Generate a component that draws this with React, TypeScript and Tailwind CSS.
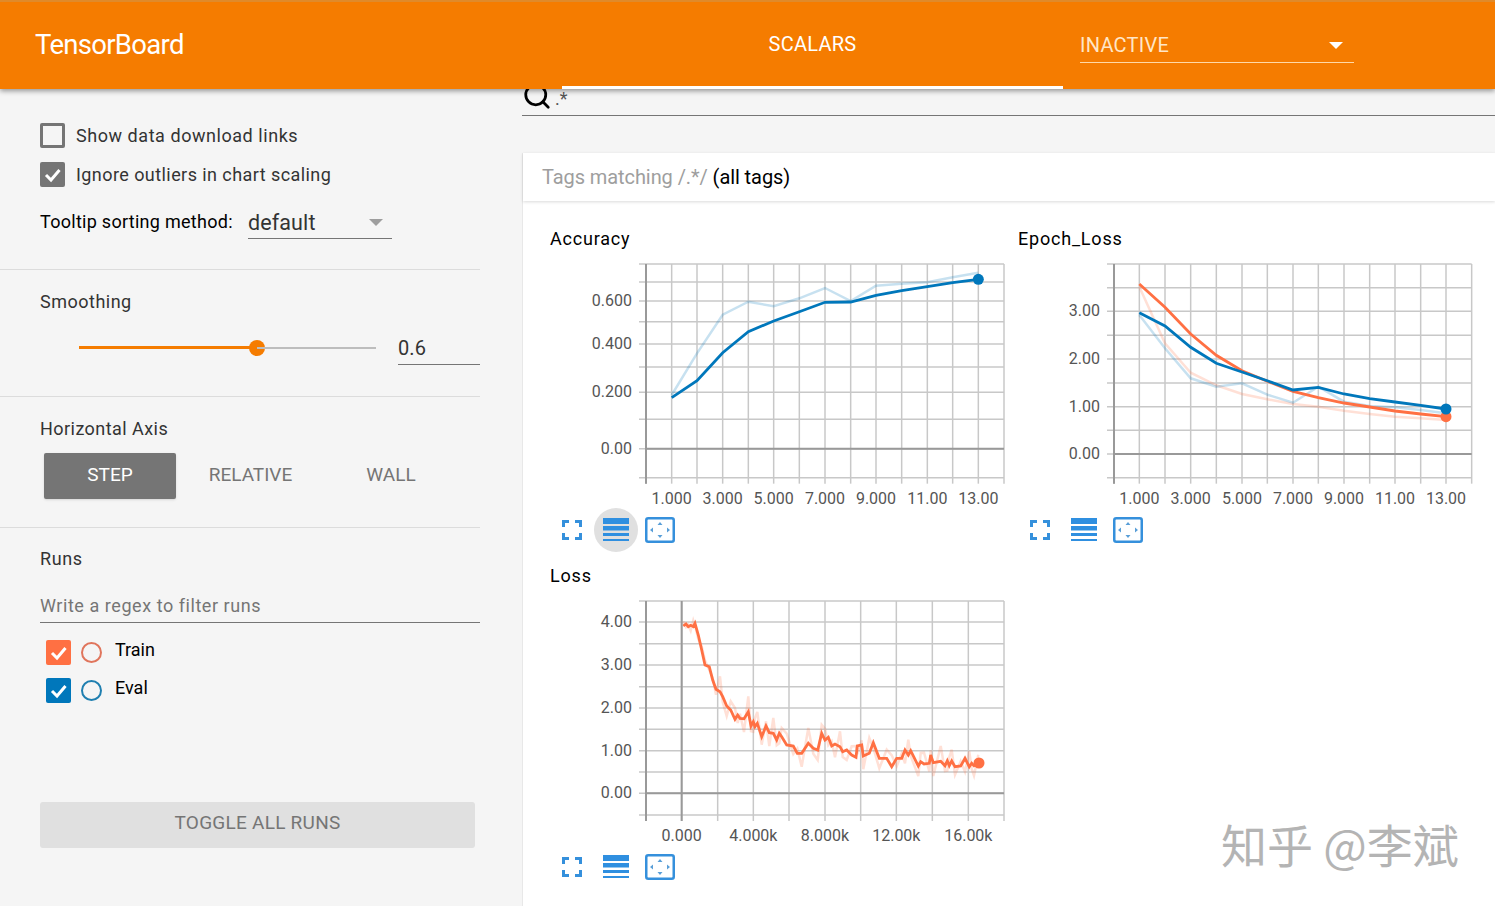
import { Search } from "lucide-react";

const FONT = "font-['Roboto',sans-serif]";
const BLUE = "#0077bb";
const ORANGE = "#ff7043";

type Pt = number[];

type Series = {
  color: string;
  light: Pt[];
  main: Pt[];
  dot?: Pt;
};

type ChartProps = {
  title: string;
  dx: number;
  dy: number;
  vLines: number[];
  hLines: number[];
  zeroV?: number;
  zeroH: number;
  xLabels: [number, string][];
  yLabels: [number, string][];
  series: Series[];
  active?: boolean;
};

const accuracyLight = [[395, 525], [471, 400], [548, 284], [625, 245], [701, 259], [778, 235], [855, 204], [932, 243], [1008, 197], [1085, 191], [1162, 187], [1238, 172], [1315, 158]];
const accuracyMain = [[395, 533], [471, 482], [548, 398], [625, 335], [701, 303], [778, 275], [855, 247], [932, 246], [1008, 226], [1085, 212], [1162, 200], [1238, 188], [1315, 178]];

const epochBlueLight = [[388, 285], [465, 385], [542, 475], [619, 500], [696, 490], [772, 524], [849, 548], [925, 500], [1002, 545], [1079, 558], [1155, 562], [1232, 570], [1308, 580]];
const epochBlue = [[388, 278], [465, 318], [542, 382], [619, 430], [696, 456], [772, 482], [849, 510], [925, 502], [1002, 522], [1079, 536], [1155, 546], [1232, 556], [1308, 567]];
const epochOrangeLight = [[388, 200], [465, 370], [542, 458], [619, 496], [696, 522], [772, 538], [849, 552], [925, 560], [1002, 572], [1079, 582], [1155, 590], [1232, 595], [1308, 600]];
const epochOrange = [[388, 192], [465, 262], [542, 342], [619, 406], [696, 452], [772, 484], [849, 514], [925, 533], [1002, 549], [1079, 561], [1155, 573], [1232, 582], [1308, 590]];

// traced from the loss curve, x and y at the chart's 3x grid
const lossRaw = [[40, 78], [48, 72], [55, 80], [62, 76], [70, 80], [75, 70], [85, 105], [95, 150], [105, 195], [118, 200], [128, 240], [138, 268], [150, 275], [158, 290], [170, 318], [182, 330], [195, 358], [203, 345], [210, 355], [222, 356], [235, 335], [243, 378], [250, 365], [255, 380], [262, 370], [275, 410], [288, 378], [298, 398], [310, 400], [320, 420], [328, 400], [335, 410], [350, 435], [370, 438], [382, 460], [395, 460], [415, 430], [430, 445], [443, 450], [455, 400], [465, 420], [475, 412], [485, 438], [495, 432], [510, 440], [518, 455], [530, 450], [545, 465], [558, 472], [562, 438], [575, 435], [580, 468], [598, 460], [610, 428], [628, 475], [650, 475], [665, 500], [680, 475], [695, 475], [705, 450], [715, 465], [722, 452], [745, 498], [752, 485], [762, 492], [778, 490], [782, 465], [790, 488], [812, 484], [825, 497], [832, 482], [838, 497], [845, 483], [855, 500], [872, 498], [885, 475], [898, 500], [905, 490], [912, 497], [925, 490]];
const lossMain = lossRaw.map(([x, y]) => [x + 390, y + 120]);
const noise = [-34, 24, -14, 40, -46, 16, 30, -26];
const lossLight = lossMain.map(([x, y], i) => [x, y + noise[i % noise.length] * (i < 12 ? 0.4 : 1)]);

const toPath = (pts: Pt[], dx: number, dy: number) =>
  pts.map(([x, y]) => `${(x / 3 - dx).toFixed(1)},${(y / 3 - dy).toFixed(1)}`).join(" ");

const FullscreenIcon = () => (
  <svg width="20" height="20" viewBox="0 0 20 20" fill="none" stroke="#3590dc" strokeWidth="3">
    <path d="M1.500 7V1.500H7M13 1.500h5.500V7M18.500 13v5.500H13M7 18.500H1.500V13" />
  </svg>
);

const ListIcon = () => (
  <svg width="26" height="24" viewBox="0 0 26 24" fill="#2f8fe0">
    <rect x="0" y="0" width="26" height="6" />
    <rect x="0" y="8" width="26" height="4.500" />
    <rect x="0" y="15" width="26" height="3" />
    <rect x="0" y="21" width="26" height="2" />
  </svg>
);

const FitIcon = () => (
  <svg width="30" height="26" viewBox="0 0 30 26" fill="none">
    <rect x="1.250" y="1.250" width="27.500" height="23.500" rx="2" stroke="#3590dc" strokeWidth="2.500" />
    <path d="M15 5l2.500 3h-5zM15 21l2.500-3h-5zM5 13l3-2.500v5zM25 13l-3-2.500v5z" fill="#5a9fd8" />
  </svg>
);

const Chart = ({ title, dx, dy, vLines, hLines, zeroV, zeroH, xLabels, yLabels, series, active }: ChartProps) => {
  const left = vLines[0];
  const right = vLines[vLines.length - 1];
  const top = hLines[0];
  const bottom = hLines[hLines.length - 1];
  const X = (v: number) => v / 3 - dx;
  const Y = (v: number) => v / 3 - dy;

  return (
    <div className="w-[468px] h-[337px]">
      <div className="h-6 pt-px text-[18px] leading-6 tracking-[0.8px] text-black">{title}</div>
      <svg width="460" height="250" className="mt-2 block">
        {vLines.map((v) => (
          <line key={v} x1={X(v)} x2={X(v)} y1={Y(top)} y2={Y(bottom) + 6} stroke="#c8c8c8" strokeWidth="1.500" />
        ))}
        {hLines.map((h) => (
          <line key={h} x1={X(left) - 7} x2={X(right)} y1={Y(h)} y2={Y(h)} stroke="#c8c8c8" strokeWidth="1.500" />
        ))}
        <line x1={X(left)} x2={X(left)} y1={Y(top)} y2={Y(bottom) + 6} stroke="#999999" strokeWidth="2" />
        {zeroV !== undefined && (
          <line x1={X(zeroV)} x2={X(zeroV)} y1={Y(top)} y2={Y(bottom) + 6} stroke="#999999" strokeWidth="2" />
        )}
        <line x1={X(left)} x2={X(right)} y1={Y(zeroH)} y2={Y(zeroH)} stroke="#999999" strokeWidth="2" />

        {yLabels.map(([y, text]) => (
          <text key={text} x="82" y={Y(y) + 5} textAnchor="end" fontSize="16" fill="#555555">
            {text}
          </text>
        ))}
        {xLabels.map(([x, text]) => (
          <text key={text} x={X(x)} y="246" textAnchor="middle" fontSize="16" fill="#555555">
            {text}
          </text>
        ))}

        {series.map((s) => (
          <polyline key={s.color + "l"} points={toPath(s.light, dx, dy)} fill="none" stroke={s.color} strokeOpacity="0.22" strokeWidth="2.500" />
        ))}
        {series.map((s) => (
          <polyline key={s.color + "m"} points={toPath(s.main, dx, dy)} fill="none" stroke={s.color} strokeWidth="2.800" />
        ))}
        {series.map(
          (s) => s.dot && <circle key={s.color + "d"} cx={X(s.dot[0])} cy={Y(s.dot[1])} r="5.500" fill={s.color} />,
        )}
      </svg>
      <div className="flex h-11 items-center">
        <button className="flex h-11 w-11 items-center justify-center">
          <FullscreenIcon />
        </button>
        <button className={`flex h-11 w-11 items-center justify-center rounded-full ${active ? "bg-[#e0e0e0]" : ""}`}>
          <ListIcon />
        </button>
        <button className="flex h-11 w-11 items-center justify-center">
          <FitIcon />
        </button>
      </div>
    </div>
  );
};

const Check = ({ bg, checked = true }: { bg: string; checked?: boolean }) => (
  <span className={`flex h-[25px] w-[25px] items-center justify-center rounded-[2px] ${bg}`}>
    {checked && (
      <svg width="21" height="21" viewBox="0 0 21 21" fill="none" stroke="#ffffff" strokeWidth="3">
        <path d="M4 11l5 5 8.500-10" />
      </svg>
    )}
  </span>
);

const Caret = ({ className }: { className: string }) => <span className={`h-0 w-0 border-x-[7px] border-t-[7px] border-x-transparent ${className}`} />;

const Sidebar = () => (
  <aside className="w-[522px] shrink-0 text-[18px] text-[#333333]">
    {/* Options */}
    <div className="h-[181px] w-[480px] border-b border-[#dcdcdc] pl-10 pt-[34px]">
      <div className="flex h-6 items-center gap-[11px] tracking-[0.55px]">
        <span className="h-[25px] w-[25px] rounded-[2px] border-[3px] border-[#757575]" />
        Show data download links
      </div>
      <div className="mt-[15px] flex h-6 items-center gap-[11px] tracking-[0.43px]">
        <Check bg="bg-[#757575]" />
        Ignore outliers in chart scaling
      </div>
      <div className="mt-[20px] flex items-start">
        <span className="h-[30px] w-[208px] pt-px leading-[30px] tracking-[0.28px] text-black">Tooltip sorting method:</span>
        <div className="flex h-[33px] w-[144px] items-center justify-between border-b border-[#757575] pr-[9px] pt-[1px] text-[21.5px] leading-[30px] tracking-[0.1px]">
          default
          <Caret className="-mt-[1px] border-t-[#9e9e9e]" />
        </div>
      </div>
    </div>

    {/* Smoothing */}
    <div className="h-[127px] w-[480px] border-b border-[#dcdcdc] pl-10 pt-[20px]">
      <div className="leading-6 tracking-[0.5px]">Smoothing</div>
      <div className="mt-[18px] flex items-center">
        <div className="-mt-[2px] ml-[39px] flex h-[30px] w-[297px] items-center">
          <div className="h-[3px] w-[178px] bg-[#f57c00]" />
          <div className="-mx-2 h-4 w-4 rounded-full bg-[#f57c00]" />
          <div className="h-[2px] flex-1 bg-[#bdbdbd]" />
        </div>
        <div className="ml-[22px] h-[33px] w-[82px] border-b border-[#757575] pt-1 text-[20px] leading-[24px] tracking-[0.1px]">0.6</div>
      </div>
    </div>

    {/* Horizontal Axis */}
    <div className="h-[131px] w-[480px] border-b border-[#dcdcdc] pl-10 pt-[20px]">
      <div className="leading-6 tracking-[0.45px]">Horizontal Axis</div>
      <div className="ml-1 mt-[12px] flex h-[46px] items-center text-[19px] text-[#757575]">
        <div className="flex h-[46px] w-[132px] items-center justify-center rounded-[2px] bg-[#757575] pb-[2px] text-white shadow-sm">STEP</div>
        <div className="-mt-[2px] w-[149px] text-center">RELATIVE</div>
        <div className="-mt-[2px] w-[132px] text-center">WALL</div>
      </div>
    </div>

    {/* Runs */}
    <div className="pl-10 pt-[19px]">
      <div className="leading-6 tracking-[0.6px]">Runs</div>
      <div className="mt-[20px] h-[32px] w-[440px] border-b border-[#757575] leading-[30px] tracking-[0.55px] text-[#757575]">Write a regex to filter runs</div>
      <div className="ml-1.5 mt-[17px] flex h-[25px] items-center text-black">
        <Check bg="bg-[#ff7043]" />
        <span className="ml-[10px] h-[21px] w-[21px] rounded-full border-2 border-[#e0755c]" />
        <span className="-mt-[6px] ml-[13px]">Train</span>
      </div>
      <div className="ml-1.5 mt-[13px] flex h-[25px] items-center text-black">
        <Check bg="bg-[#0077bb]" />
        <span className="ml-[10px] h-[21px] w-[21px] rounded-full border-2 border-[#1f7fb0]" />
        <span className="-mt-[7px] ml-[13px]">Eval</span>
      </div>
      <button className="mt-[99px] block h-[46px] w-[435px] rounded-[3px] bg-[#e0e0e0] pb-[3px] text-[19px] tracking-[0.25px] text-[#757575]">TOGGLE ALL RUNS</button>
    </div>
  </aside>
);

export default function App() {
  return (
    <div className={`relative flex h-[906px] w-full flex-col overflow-hidden bg-[#f5f5f5] ${FONT}`}>
      {/* Top bar */}
      <header className="relative z-10 flex h-[89px] shrink-0 border-t-2 border-[#e08a2a] bg-[#f57c00] text-white shadow-[0_2px_5px_rgba(0,0,0,0.4)]">
        <div className="w-[562px] pl-[35px] pt-[25px] text-[27.5px] leading-9 tracking-[-0.7px]">TensorBoard</div>
        <div className="flex w-[501px] justify-center border-b-[3px] border-white pt-[30px] text-[20px] leading-6 tracking-[0.25px]">SCALARS</div>
        <div className="ml-[17px] flex h-[61px] w-[274px] items-end justify-between border-b border-[#ffd9a8] pb-[1px] pr-[11px] text-[20px] leading-8 tracking-[0.25px] text-[#ffe6c7]">
          INACTIVE
          <Caret className="mb-[12px] border-t-white" />
        </div>
      </header>

      <div className="flex min-h-0 flex-1">
        <Sidebar />

        <main className="flex min-w-0 flex-1 flex-col">
          {/* Regex search */}
          <div className="flex h-[27px] shrink-0 items-center border-b border-[#757575]">
            <Search size={30} strokeWidth={2.2} className="-mt-[13px] text-black" />
            <span className="-mt-[8px] ml-[3px] text-[18px] text-[#555555]">.*</span>
          </div>

          <div className="mt-[37px] flex min-h-0 flex-1 flex-col border-l border-[#e8e8e8] bg-white">
            <div className="flex h-[48px] shrink-0 items-center pl-[19px] text-[20px] tracking-[-0.08px] shadow-[0_1px_3px_rgba(0,0,0,0.15)]">
              <span className="text-[#9e9e9e]">Tags matching /.*/&nbsp;</span>
              <span className="text-black">(all tags)</span>
            </div>

            {/* Charts */}
            <div className="grid grid-cols-[468px_468px] pl-[27px] pt-[25px]">
              <Chart
                title="Accuracy"
                dx={10}
                dy={38}
                active
                vLines={[318, 395, 471, 548, 625, 701, 778, 855, 932, 1008, 1085, 1162, 1238, 1315, 1392]}
                hLines={[132, 186, 243, 305, 372, 441, 517, 598, 686, 773]}
                zeroH={686}
                xLabels={[[395, "1.000"], [548, "3.000"], [701, "5.000"], [855, "7.000"], [1008, "9.000"], [1162, "11.00"], [1315, "13.00"]]}
                yLabels={[[243, "0.600"], [372, "0.400"], [517, "0.200"], [686, "0.00"]]}
                series={[{ color: BLUE, light: accuracyLight, main: accuracyMain, dot: [1315, 178] }]}
              />
              <Chart
                title="Epoch_Loss"
                dx={8}
                dy={38}
                vLines={[312, 388, 465, 542, 619, 696, 772, 849, 925, 1002, 1079, 1155, 1232, 1308, 1385]}
                hLines={[132, 203, 274, 346, 417, 489, 560, 631, 702, 773]}
                zeroH={702}
                xLabels={[[388, "1.000"], [542, "3.000"], [696, "5.000"], [849, "7.000"], [1002, "9.000"], [1155, "11.00"], [1308, "13.00"]]}
                yLabels={[[274, "3.00"], [417, "2.00"], [560, "1.00"], [702, "0.00"]]}
                series={[
                  { color: ORANGE, light: epochOrangeLight, main: epochOrange, dot: [1308, 590] },
                  { color: BLUE, light: epochBlueLight, main: epochBlue, dot: [1308, 567] },
                ]}
              />
              <Chart
                title="Loss"
                dx={10}
                dy={35}
                vLines={[318, 425, 533, 640, 747, 855, 962, 1069, 1177, 1285, 1392]}
                hLines={[123, 186, 251, 315, 380, 444, 508, 572, 636, 700, 765]}
                zeroV={425}
                zeroH={700}
                xLabels={[[425, "0.000"], [640, "4.000k"], [855, "8.000k"], [1069, "12.00k"], [1285, "16.00k"]]}
                yLabels={[[186, "4.00"], [315, "3.00"], [444, "2.00"], [572, "1.00"], [700, "0.00"]]}
                series={[{ color: ORANGE, light: lossLight, main: lossMain, dot: [1317, 609] }]}
              />
            </div>
          </div>
        </main>
      </div>

      {/* Watermark */}
      <div className="absolute left-[1221px] top-[815px] whitespace-nowrap font-['Noto_Sans_CJK_SC',sans-serif] text-[46px] leading-[56px] text-[#b4b4b4]">
        知乎 @李斌
      </div>
    </div>
  );
}
